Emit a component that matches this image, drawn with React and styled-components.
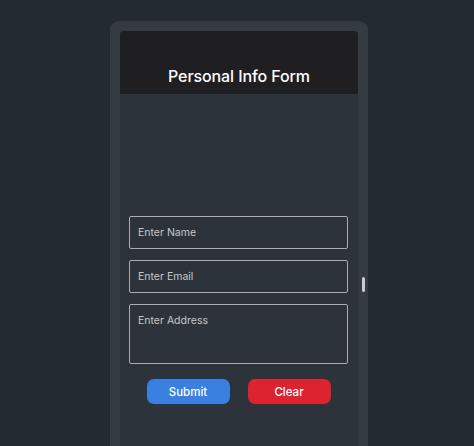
import React from 'react';
import styled, { createGlobalStyle } from 'styled-components';

const GlobalStyle = createGlobalStyle`
    html, body {
        margin: 0;
        padding: 0;
        background: #232a31;
        font-family: "Inter", "Open Sans", sans-serif;
    }
`;

function App() {
    return (
        <>
            <GlobalStyle />
            <Page>
                <Frame>
                    <Panel>
                        <Header>
                            <Title>Personal Info Form</Title>
                        </Header>
                        <FormBody>
                            <TextInput type='text' placeholder='Enter Name' />
                            <TextInput type='email' placeholder='Enter Email' />
                            <TextArea placeholder='Enter Address' />
                            <ButtonRow>
                                <ActionButton type='button' color='#3a80e1'>Submit</ActionButton>
                                <ActionButton type='button' color='#dc2330'>Clear</ActionButton>
                            </ButtonRow>
                        </FormBody>
                    </Panel>
                    <ScrollTrack>
                        <ScrollThumb />
                    </ScrollTrack>
                </Frame>
            </Page>
        </>
    );
}

export default App;

const Page = styled.div`
    display: flex;
    justify-content: center;
    height: 446px;
    overflow: hidden;
    padding: 21px 0 0 4px;
    box-sizing: border-box;
`;

const Frame = styled.div`
    display: flex;
    width: 258px;
    height: 460px;
    padding: 10px 0 0 10px;
    box-sizing: border-box;
    background: #343b43;
    border-radius: 9px;
`;

const Panel = styled.div`
    display: flex;
    flex-direction: column;
    width: 238px;
    background: #2c333a;
    border-radius: 4px 4px 0 0;
    overflow: hidden;
`;

const Header = styled.div`
    display: flex;
    align-items: flex-end;
    justify-content: center;
    height: 63px;
    padding-bottom: 8px;
    box-sizing: border-box;
    background: #1f1e20;
`;

const Title = styled.h1`
    margin: 0;
    color: #ffffff;
    font-size: 16px;
    line-height: 20px;
    font-weight: 500;
    letter-spacing: -0.1px;
`;

const FormBody = styled.div`
    display: flex;
    flex-direction: column;
    gap: 11px;
    padding: 122px 10px 0 9px;
`;

const fieldStyle = `
    width: 100%;
    box-sizing: border-box;
    background: transparent;
    border: 1px solid #a9adb2;
    border-radius: 2px;
    color: #e6e7e9;
    font-family: "Inter", "Open Sans", sans-serif;
    font-size: 10.5px;
    outline: none;
    padding: 0 8px;

    &::placeholder {
        color: #c6c9cc;
    }
`;

const TextInput = styled.input`
    ${fieldStyle}
    height: 33px;
`;

const TextArea = styled.textarea`
    ${fieldStyle}
    height: 60px;
    padding-top: 9px;
    resize: none;
`;

const ButtonRow = styled.div`
    display: flex;
    justify-content: center;
    gap: 18px;
    margin-top: 4px;
`;

const ActionButton = styled.button`
    width: 83px;
    height: 25px;
    border: none;
    border-radius: 7px;
    background: ${(props) => props.color};
    color: #ffffff;
    font-family: "Inter", "Open Sans", sans-serif;
    font-size: 11.5px;
    font-weight: 500;
    cursor: pointer;
`;

const ScrollTrack = styled.div`
    width: 10px;
    padding: 246px 0 0 4px;
    box-sizing: border-box;
`;

const ScrollThumb = styled.div`
    width: 3px;
    height: 15px;
    border-radius: 2px;
    background: #c9ccd0;
`;
